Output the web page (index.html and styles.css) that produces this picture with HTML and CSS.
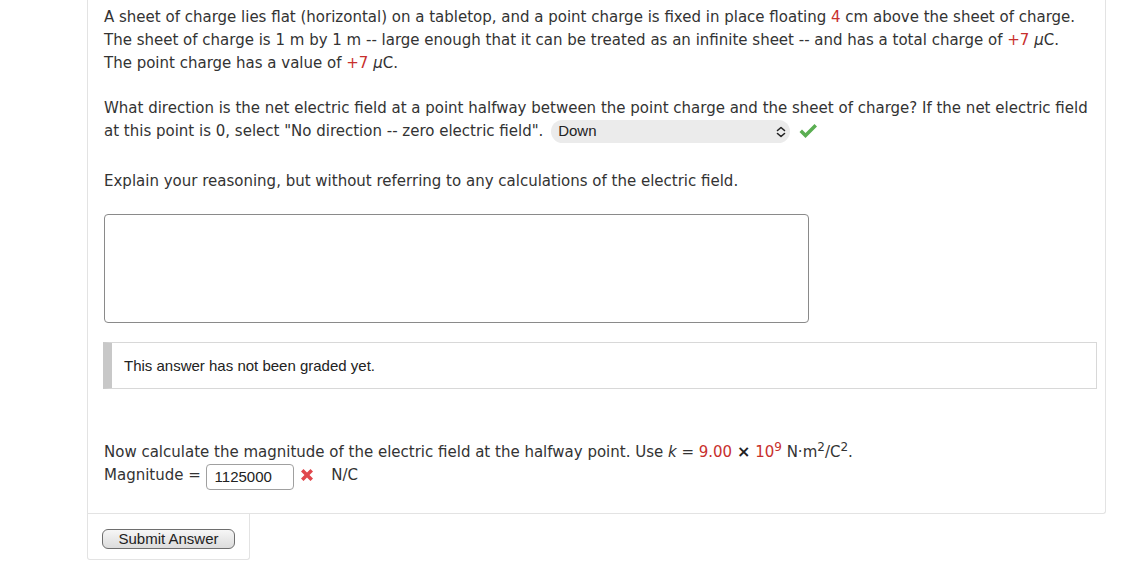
FILE: index.html
```html
<!DOCTYPE html>
<html>
<head>
<meta charset="utf-8">
<link rel="stylesheet" href="styles.css">
</head>
<body>
<div class="page">
  <div class="card">
    <p class="para p1">A sheet of charge lies flat (horizontal) on a tabletop, and a point charge is fixed in place floating <span class="red">4</span> cm above the sheet of charge. The sheet of charge is 1 m by 1 m -- large enough that it can be treated as an infinite sheet -- and has a total charge of <span class="red">+7</span> <i>μ</i>C. The point charge has a value of <span class="red">+7</span> <i>μ</i>C.</p>
    <p class="para p2">What direction is the net electric field at a point halfway between the point charge and the sheet of charge? If the net electric field at this point is 0, select "No direction -- zero electric field". <span class="select">Down<svg class="chev" viewBox="0 0 10 12" width="10" height="12"><path d="M1.5 4.5 L5 1.5 L8.5 4.5 M1.5 7.5 L5 10.5 L8.5 7.5" fill="none" stroke="#222" stroke-width="1.6" stroke-linecap="round" stroke-linejoin="round"/></svg></span><svg class="check" viewBox="0 0 20 16" width="20" height="16"><path d="M1.5 9 L4 6.5 L7.5 10 L16.5 1 L19 3.5 L7.5 15 Z" fill="#5aae52"/></svg></p>
    <p class="para p3">Explain your reasoning, but without referring to any calculations of the electric field.</p>
    <div class="textarea"></div>
    <div class="graded"><span>This answer has not been graded yet.</span></div>
    <p class="para p4">Now calculate the magnitude of the electric field at the halfway point. Use <i>k</i> = <span class="red">9.00</span> <b class="times">×</b> <span class="red">10<sup>9</sup></span> N·m<sup>2</sup>/C<sup>2</sup>.<br>Magnitude = <span class="input">1125000</span><svg class="cross" viewBox="0 0 16 16" width="16" height="16"><path d="M2 4.5 L4.5 2 L8 5.5 L11.5 2 L14 4.5 L10.5 8 L14 11.5 L11.5 14 L8 10.5 L4.5 14 L2 11.5 L5.5 8 Z" fill="#e0474c"/></svg> N/C</p>
  </div>
  <div class="submit-tab">
    <span class="btn">Submit Answer</span>
  </div>
</div>
</body>
</html>
```
FILE: styles.css
```css
html, body {
  margin: 0;
  padding: 0;
  background: #fff;
}
body {
  font-family: "DejaVu Sans", Verdana, sans-serif;
  color: #333;
}
.page {
  margin-left: 87px;
  width: 1019px;
}
.card {
  border: 1px solid #e3e3e3;
  border-top: none;
  border-radius: 0 0 3px 0;
  padding: 6px 8px 23px 16px;
}
.para {
  margin: 0;
  max-width: 986px;
  font-size: 15px;
  line-height: 23px;
}
.p2 { margin-top: 22px; }
.p3 { margin-top: 27px; }
.p4 { margin-top: 51px; }
.red { color: #c8302d; }
i { font-style: italic; }
sup { font-size: 12px; line-height: 0; vertical-align: 6px; }
.times { font-weight: bold; color: #222; font-size: 16px; }
.select {
  display: inline-flex;
  align-items: center;
  justify-content: space-between;
  box-sizing: border-box;
  width: 239px;
  height: 23px;
  margin-left: 3px;
  padding: 0 4px 2px 7px;
  background: #ebebeb;
  border-radius: 12px;
  font-family: "Liberation Sans", Arial, sans-serif;
  font-size: 15px;
  line-height: 17px;
  color: #222;
  vertical-align: top;
}
.chev { display: block; margin-top: 2px; }
.check { vertical-align: -3px; margin-left: 8px; }
.textarea {
  margin-top: 21px;
  width: 705px;
  height: 109px;
  box-sizing: border-box;
  border: 1px solid #8a8a8a;
  border-radius: 4px;
}
.graded {
  margin-top: 19px;
  margin-left: -1px;
  height: 47px;
  box-sizing: border-box;
  border: 1px solid #d8d8d8;
  border-left: 9px solid #c8c8c8;
  display: flex;
  align-items: center;
  padding-left: 12px;
  font-family: "Liberation Sans", Arial, sans-serif;
  font-size: 15px;
  color: #222;
}
.input {
  display: inline-block;
  box-sizing: border-box;
  width: 88px;
  height: 26px;
  line-height: 24px;
  border: 1px solid #a0a0a0;
  border-radius: 4px;
  padding-left: 8px;
  font-family: "Liberation Sans", Arial, sans-serif;
  font-size: 15px;
  color: #222;
  vertical-align: top;
}
.cross { vertical-align: -3px; margin: 0 12px 0 5px; }
.submit-tab {
  width: 163px;
  height: 46px;
  box-sizing: border-box;
  border: 1px solid #e3e3e3;
  border-top: none;
  border-radius: 0 0 3px 3px;
  padding: 15px 0 0 14px;
  display: flex;
  align-items: flex-start;
}
.btn {
  display: block;
  box-sizing: border-box;
  width: 133px;
  height: 20px;
  line-height: 18px;
  text-align: center;
  border: 1px solid #6e6e6e;
  border-radius: 6px;
  background: linear-gradient(#f6f6f6, #dcdcdc);
  font-family: "Liberation Sans", Arial, sans-serif;
  font-size: 15px;
  color: #222;
}
```
